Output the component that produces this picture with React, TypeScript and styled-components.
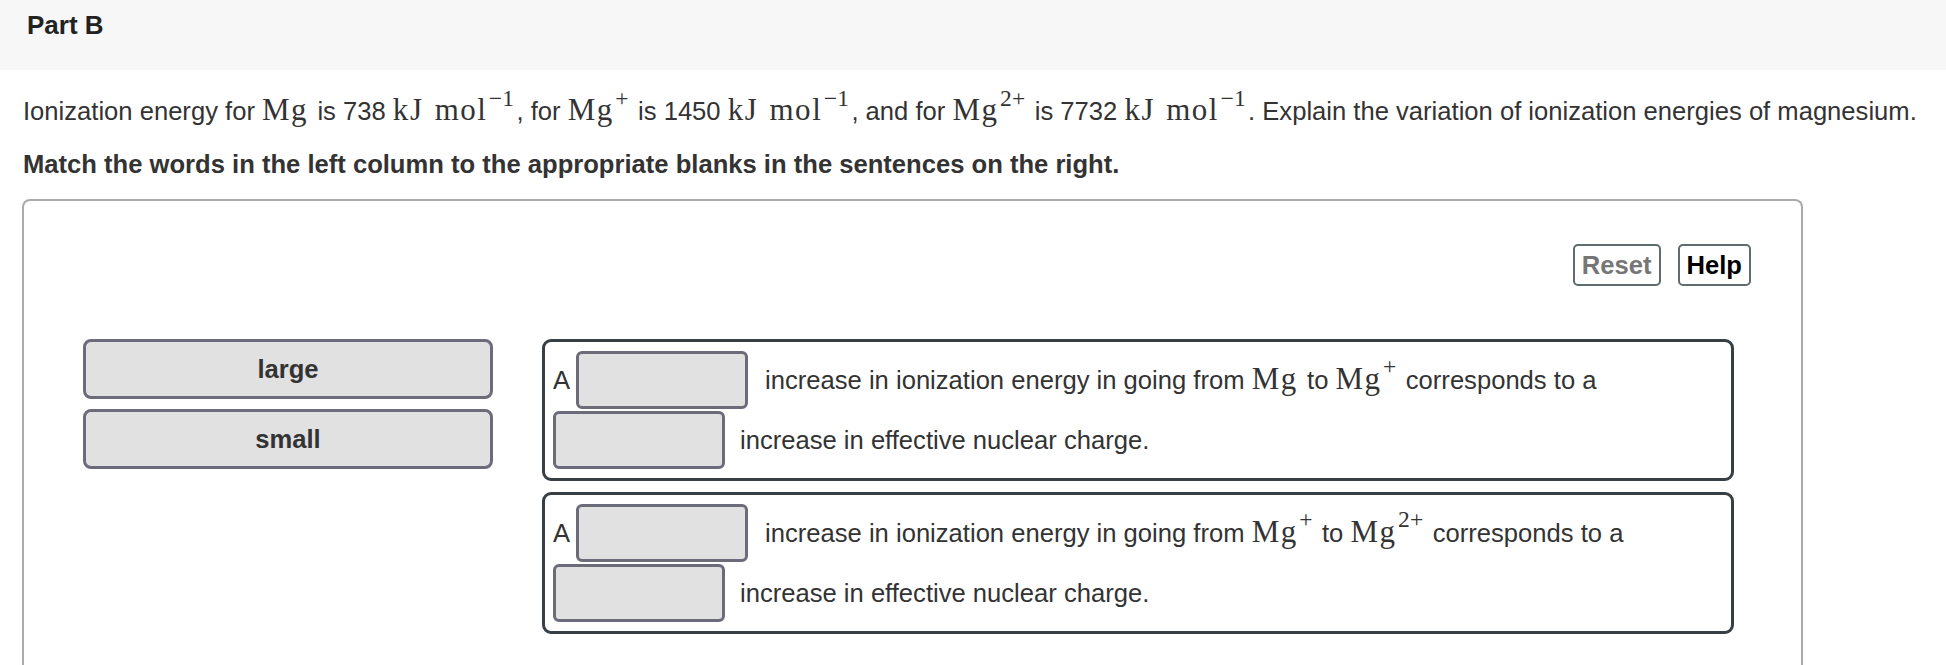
import React from 'react';
import styled, { createGlobalStyle } from 'styled-components';

const GlobalStyle = createGlobalStyle`
  body {
    margin: 0;
    background: #fff;
    font-family: 'Liberation Sans', Arial, sans-serif;
    color: #333;
  }
`;

const Header = styled.div`
  height: 70px;
  box-sizing: border-box;
  padding: 8px 0 0 27px;
  background: #f7f7f7;
  font-size: 26px;
  line-height: 34px;
  font-weight: bold;
  color: #222;
`;

const Prompt = styled.p<{ bold?: boolean }>`
  margin: ${(p) => (p.bold ? '17px' : '23px')} 0 0 23px;
  font-size: 25.6px;
  line-height: 36px;
  font-weight: ${(p) => (p.bold ? 'bold' : 'normal')};
  white-space: nowrap;
`;

const Math = styled.span`
  font-family: 'Liberation Serif', 'DejaVu Serif', serif;
  font-size: 1.21em;
  line-height: 0;
  letter-spacing: 0.05em;
  word-spacing: 0.06em;
  margin-right: 0.07em;
`;

const Sup = styled.sup`
  font-size: 0.76em;
  line-height: 0;
  letter-spacing: 0.01em;
  margin-left: 0.06em;
  vertical-align: 0.6em;
`;

const Panel = styled.div`
  margin: 17px 0 0 22px;
  width: 1781px;
  height: 480px;
  box-sizing: border-box;
  border: 2px solid #aaa;
  border-bottom: none;
  border-radius: 8px 8px 0 0;
`;

const Toolbar = styled.div`
  display: flex;
  justify-content: flex-end;
  gap: 17px;
  padding: 43px 50px 0 0;
`;

const ToolButton = styled.button<{ muted?: boolean }>`
  height: 42px;
  box-sizing: border-box;
  padding: 0 7px;
  border: 2px solid #5f6b6d;
  border-radius: 5px;
  background: #fff;
  font-family: 'Liberation Sans', Arial, sans-serif;
  font-size: 25.6px;
  font-weight: bold;
  color: ${(p) => (p.muted ? '#767676' : '#000')};
`;

const Workspace = styled.div`
  display: flex;
  gap: 49px;
  margin-top: 53px;
  padding-left: 59px;
`;

const WordColumn = styled.div`
  display: flex;
  flex-direction: column;
  gap: 10px;
  width: 410px;
`;

const Word = styled.div`
  height: 60px;
  box-sizing: border-box;
  display: flex;
  align-items: center;
  justify-content: center;
  border: 3px solid #6b6b7a;
  border-radius: 8px;
  background: #e1e1e1;
  font-size: 25.6px;
  font-weight: bold;
  color: #333;
`;

const SentenceColumn = styled.div`
  display: flex;
  flex-direction: column;
  gap: 11px;
  width: 1192px;
`;

const Sentence = styled.div`
  height: 142px;
  box-sizing: border-box;
  padding: 9px 8px 0;
  border: 3px solid #384045;
  border-radius: 9px;
  font-size: 25.6px;
`;

const Line = styled.div<{ first?: boolean }>`
  display: flex;
  align-items: center;
  margin-top: ${(p) => (p.first ? '0' : '2px')};
  white-space: nowrap;
`;

const Blank = styled.span<{ lead?: boolean }>`
  display: inline-block;
  width: 172px;
  height: 58px;
  box-sizing: border-box;
  margin-left: ${(p) => (p.lead ? '6px' : '0')};
  margin-right: ${(p) => (p.lead ? '17px' : '15px')};
  border: 3px solid #6b6b7a;
  border-radius: 6px;
  background: #e1e1e1;
`;

const Mg = ({ charge }: { charge?: string }) => (
  <Math>
    Mg{charge ? <Sup>{charge}</Sup> : null}
  </Math>
);

const Unit = () => (
  <Math>
    kJ mol<Sup>−1</Sup>
  </Math>
);

function SentenceCard({ from, to }: { from?: string; to: string }) {
  return (
    <Sentence>
      <Line first>
        A<Blank lead />
        <span>
          increase in ionization energy in going from <Mg charge={from} /> to <Mg charge={to} /> corresponds to a
        </span>
      </Line>
      <Line>
        <Blank />
        <span>increase in effective nuclear charge.</span>
      </Line>
    </Sentence>
  );
}

export default function App() {
  return (
    <>
      <GlobalStyle />
      <Header>Part B</Header>
      <Prompt>
        Ionization energy for <Mg /> is 738 <Unit />, for <Mg charge="+" /> is 1450 <Unit />, and for{' '}
        <Mg charge="2+" /> is 7732 <Unit />. Explain the variation of ionization energies of magnesium.
      </Prompt>
      <Prompt bold>Match the words in the left column to the appropriate blanks in the sentences on the right.</Prompt>
      <Panel>
        <Toolbar>
          <ToolButton muted>Reset</ToolButton>
          <ToolButton>Help</ToolButton>
        </Toolbar>
        <Workspace>
          <WordColumn>
            <Word>large</Word>
            <Word>small</Word>
          </WordColumn>
          <SentenceColumn>
            <SentenceCard to="+" />
            <SentenceCard from="+" to="2+" />
          </SentenceColumn>
        </Workspace>
      </Panel>
    </>
  );
}
